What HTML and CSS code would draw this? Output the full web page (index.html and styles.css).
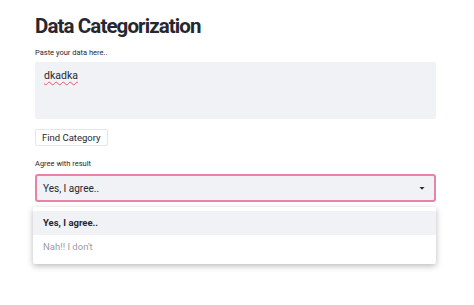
FILE: index.html
```html
<!DOCTYPE html>
<html lang="en">
<head>
  <meta charset="UTF-8">
  <title>Data Categorization</title>
  <link rel="stylesheet" href="styles.css">
</head>
<body>
  <div class="main">
    <h1>Data Categorization</h1>

    <label class="label">Paste your data here..</label>
    <div class="textarea"><span class="typo">dkadka</span></div>

    <button class="btn">Find Category</button>

    <label class="label agree">Agree with result</label>
    <div class="select">
      <span>Yes, I agree..</span>
      <svg class="caret" width="8" height="5" viewBox="0 0 8 5"><path d="M1.5 1h5L4 3.8z" fill="#262730"/></svg>
    </div>
    <ul class="menu">
      <li class="active">Yes, I agree..</li>
      <li>Nah!! I don't</li>
    </ul>
  </div>
</body>
</html>
```

FILE: styles.css
```css
body {
  margin: 0;
  background: #fff;
  color: #262730;
  font-family: Roboto, "Noto Sans", sans-serif;
}
.main {
  padding: 11px 38px 40px 35px;
}
h1 {
  margin: 0 0 7px;
  font-size: 20.5px;
  line-height: 30px;
  font-weight: 700;
  letter-spacing: -0.9px;
  color: #262730;
}
.label {
  display: block;
  font-size: 7.5px;
  line-height: 10px;
  color: #262730;
  margin-bottom: 4px;
}
.textarea {
  height: 57px;
  background: #f0f2f6;
  border-radius: 2px;
  padding: 6px 9px;
  box-sizing: border-box;
  font-size: 10.5px;
  line-height: 16px;
}
.typo {
  text-decoration: underline wavy #e05a5a;
  text-decoration-thickness: 1px;
  text-underline-offset: 2px;
}
.btn {
  display: block;
  margin-top: 10px;
  height: 17px;
  padding: 0 6px;
  background: #fff;
  border: 1px solid #e6e6ea;
  border-radius: 2px;
  font-family: inherit;
  font-size: 9.5px;
  line-height: 15px;
  color: #262730;
}
.agree {
  margin-top: 13px;
  margin-bottom: 5px;
}
.select {
  height: 28px;
  box-sizing: border-box;
  border: 2px solid #ea82a8;
  border-radius: 3px;
  background: #f0f2f6;
  display: flex;
  align-items: center;
  justify-content: space-between;
  padding: 0 8px 0 6px;
  font-size: 10px;
}
.menu {
  margin: 5px 0 0 -2px;
  padding: 4px 0 5px;
  list-style: none;
  background: #fff;
  box-shadow: 0 2px 6px rgba(0, 0, 0, 0.28);
  border-radius: 2px;
}
.menu li {
  height: 24px;
  line-height: 24px;
  padding-left: 10px;
  font-size: 9.5px;
  color: #9a9ca4;
}
.menu li.active {
  background: #f0f2f6;
  color: #262730;
  font-weight: 700;
}
```
